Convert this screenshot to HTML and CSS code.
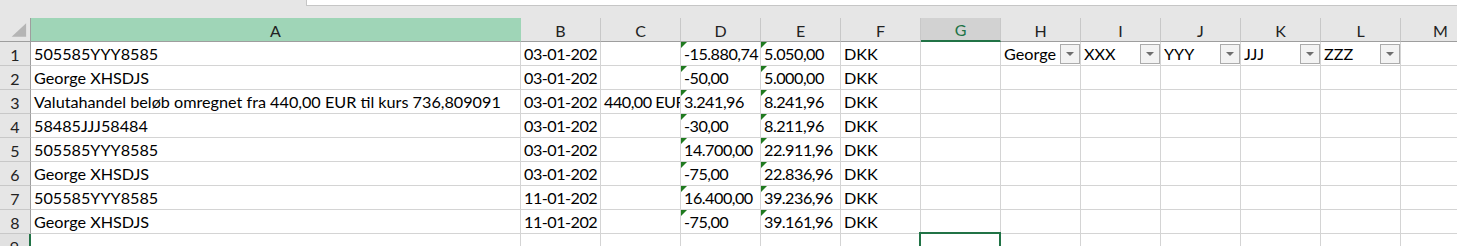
FILE: index.html
```html
<!DOCTYPE html>
<html>
<head>
<meta charset="utf-8">
<link rel="stylesheet" href="styles.css">
</head>
<body>
<div class="app">
  <div class="topband"><div class="fbar"></div></div>
  <div class="sheet">
    <div class="ch corner"><svg width="31" height="24" viewBox="0 0 31 24"><polygon points="27,5 27,19 12,19" fill="#b5b5b5"/></svg></div>
    <div class="ch cha">A</div>
    <div class="ch">B</div>
    <div class="ch">C</div>
    <div class="ch">D</div>
    <div class="ch">E</div>
    <div class="ch">F</div>
    <div class="ch chsel">G</div>
    <div class="ch">H</div>
    <div class="ch">I</div>
    <div class="ch">J</div>
    <div class="ch">K</div>
    <div class="ch">L</div>
    <div class="ch">M</div>

    <div class="rh">1</div>
    <div class="c">505585YYY8585</div>
    <div class="c n">03-01-202</div>
    <div class="c"></div>
    <div class="c tri n">-15.880,74</div>
    <div class="c tri n">5.050,00</div>
    <div class="c">DKK</div>
    <div class="c"></div>
    <div class="c dd"><span>George</span><i class="btn"></i></div>
    <div class="c dd"><span>XXX</span><i class="btn"></i></div>
    <div class="c dd"><span>YYY</span><i class="btn"></i></div>
    <div class="c dd"><span>JJJ</span><i class="btn"></i></div>
    <div class="c dd"><span>ZZZ</span><i class="btn"></i></div>
    <div class="c"></div>

    <div class="rh">2</div>
    <div class="c">George XHSDJS</div>
    <div class="c n">03-01-202</div>
    <div class="c"></div>
    <div class="c tri n">-50,00</div>
    <div class="c tri n">5.000,00</div>
    <div class="c">DKK</div>
    <div class="c"></div><div class="c"></div><div class="c"></div><div class="c"></div><div class="c"></div><div class="c"></div><div class="c"></div>

    <div class="rh">3</div>
    <div class="c">Valutahandel beløb omregnet fra 440,00 EUR til kurs 736,809091</div>
    <div class="c n">03-01-202</div>
    <div class="c n">440,00 EUR</div>
    <div class="c tri n">3.241,96</div>
    <div class="c tri n">8.241,96</div>
    <div class="c">DKK</div>
    <div class="c"></div><div class="c"></div><div class="c"></div><div class="c"></div><div class="c"></div><div class="c"></div><div class="c"></div>

    <div class="rh">4</div>
    <div class="c">58485JJJ58484</div>
    <div class="c n">03-01-202</div>
    <div class="c"></div>
    <div class="c tri n">-30,00</div>
    <div class="c tri n">8.211,96</div>
    <div class="c">DKK</div>
    <div class="c"></div><div class="c"></div><div class="c"></div><div class="c"></div><div class="c"></div><div class="c"></div><div class="c"></div>

    <div class="rh">5</div>
    <div class="c">505585YYY8585</div>
    <div class="c n">03-01-202</div>
    <div class="c"></div>
    <div class="c tri n">14.700,00</div>
    <div class="c tri n">22.911,96</div>
    <div class="c">DKK</div>
    <div class="c"></div><div class="c"></div><div class="c"></div><div class="c"></div><div class="c"></div><div class="c"></div><div class="c"></div>

    <div class="rh">6</div>
    <div class="c">George XHSDJS</div>
    <div class="c n">03-01-202</div>
    <div class="c"></div>
    <div class="c tri n">-75,00</div>
    <div class="c tri n">22.836,96</div>
    <div class="c">DKK</div>
    <div class="c"></div><div class="c"></div><div class="c"></div><div class="c"></div><div class="c"></div><div class="c"></div><div class="c"></div>

    <div class="rh">7</div>
    <div class="c">505585YYY8585</div>
    <div class="c n">11-01-202</div>
    <div class="c"></div>
    <div class="c tri n">16.400,00</div>
    <div class="c tri n">39.236,96</div>
    <div class="c">DKK</div>
    <div class="c"></div><div class="c"></div><div class="c"></div><div class="c"></div><div class="c"></div><div class="c"></div><div class="c"></div>

    <div class="rh">8</div>
    <div class="c">George XHSDJS</div>
    <div class="c n">11-01-202</div>
    <div class="c"></div>
    <div class="c tri n">-75,00</div>
    <div class="c tri n">39.161,96</div>
    <div class="c">DKK</div>
    <div class="c"></div><div class="c"></div><div class="c"></div><div class="c"></div><div class="c"></div><div class="c"></div><div class="c"></div>

    <div class="rh rhsel">9</div>
    <div class="c"></div>
    <div class="c"></div>
    <div class="c"></div>
    <div class="c"></div>
    <div class="c"></div>
    <div class="c"></div>
    <div class="c active"></div>
    <div class="c"></div><div class="c"></div><div class="c"></div><div class="c"></div><div class="c"></div><div class="c"></div>
  </div>
</div>
</body>
</html>
```

FILE: styles.css
```css
html, body {
  margin: 0;
  padding: 0;
  background: #ffffff;
  overflow: hidden;
}
.app {
  width: 1457px;
  height: 246px;
  overflow: hidden;
  font-family: "Lato", "Liberation Sans", sans-serif;
  font-size: 16.2px;
  color: #000;
}
.topband {
  height: 18px;
  background: #e6e6e6;
  display: flex;
  justify-content: flex-end;
}
.fbar {
  width: 1150px;
  height: 5px;
  background: #ffffff;
  border-left: 1px solid #c6c6c6;
  border-bottom: 1px solid #c6c6c6;
}
.sheet {
  display: grid;
  grid-template-columns: 31px 490px repeat(12, 80px);
  grid-auto-rows: 24px;
  width: 1481px;
}
.ch {
  box-sizing: border-box;
  background: #e6e6e6;
  border-right: 1px solid #c8c8c8;
  border-bottom: 1px solid #9e9e9e;
  display: flex;
  align-items: center;
  justify-content: center;
  color: #222;
  padding-top: 1px;
  font-size: 16px;
}
.corner {
  padding: 0;
  border-right: 1px solid #9e9e9e;
}
.corner svg { display: block; }
.cha {
  background: #9fd5b7;
  border-right-color: #9fd5b7;
}
.chsel {
  background: #d2d2d2;
  color: #217346;
  border-bottom: 2px solid #217346;
}
.rh {
  box-sizing: border-box;
  background: #e6e6e6;
  border-right: 1px solid #9e9e9e;
  border-bottom: 1px solid #c8c8c8;
  display: flex;
  align-items: center;
  justify-content: center;
  color: #222;
  padding-top: 1px;
  font-size: 16px;
}
.rhsel {
  background: #e1e1e1;
  border-right: 2px solid #217346;
}
.c {
  box-sizing: border-box;
  position: relative;
  border-right: 1px solid #d4d4d4;
  border-bottom: 1px solid #d4d4d4;
  padding: 0 0 2px 3px;
  white-space: nowrap;
  overflow: hidden;
  display: flex;
  align-items: flex-end;
  line-height: 19px;
}
.n {
  letter-spacing: -0.5px;
}
.tri::before {
  content: "";
  position: absolute;
  left: 0;
  top: 0;
  width: 6px;
  height: 6px;
  background: #1f7a1f;
  clip-path: polygon(0 0, 100% 0, 0 100%);
}
.dd {
  padding-right: 0;
  padding-bottom: 0;
  align-items: stretch;
}
.dd span {
  flex: 1;
  overflow: hidden;
  display: flex;
  align-items: flex-end;
  padding-bottom: 2px;
}
.btn {
  box-sizing: border-box;
  flex: none;
  width: 20px;
  height: 20px;
  margin: auto 0 1px 0;
  border: 1px solid #ababab;
  background: #f3f3f3;
  display: flex;
  align-items: center;
  justify-content: center;
}
.btn::after {
  content: "";
  width: 0;
  height: 0;
  border-left: 4px solid transparent;
  border-right: 4px solid transparent;
  border-top: 4px solid #6e6e6e;
}
.active {
  overflow: visible;
}
.active::after {
  content: "";
  position: absolute;
  left: -2px;
  top: -2px;
  width: 82px;
  height: 30px;
  box-sizing: border-box;
  border: 2px solid #217346;
}
```
